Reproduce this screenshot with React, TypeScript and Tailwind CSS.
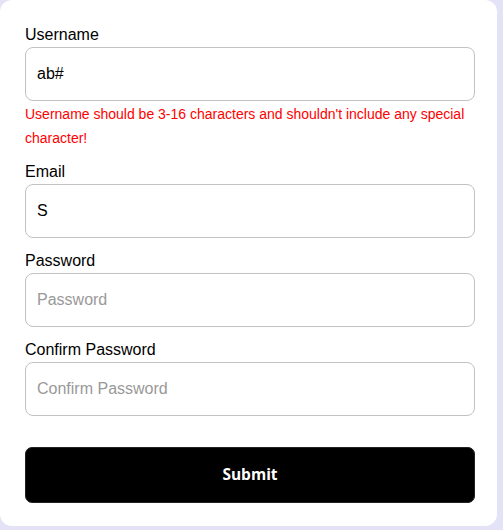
import { useState } from "react";

type Field = {
  name: string;
  label: string;
  type: string;
  placeholder: string;
  error?: string;
};

const fields: Field[] = [
  {
    name: "username",
    label: "Username",
    type: "text",
    placeholder: "Username",
    error: "Username should be 3-16 characters and shouldn't include any special character!",
  },
  { name: "email", label: "Email", type: "email", placeholder: "Email" },
  { name: "password", label: "Password", type: "password", placeholder: "Password" },
  { name: "confirmPassword", label: "Confirm Password", type: "password", placeholder: "Confirm Password" },
];

export default function App() {
  const [values, setValues] = useState<Record<string, string>>({
    username: "ab#",
    email: "S",
    password: "",
    confirmPassword: "",
  });

  return (
    <div className="min-h-screen bg-[#e4e2f6] font-['Liberation_Sans',Arial,sans-serif]">
      <form
        className="w-[497px] rounded-[12px] bg-white pl-[25px] pr-[22px] pt-[25px] pb-[23px]"
        onSubmit={(e) => e.preventDefault()}
      >
        {fields.map((field) => (
          <FormInput
            key={field.name}
            field={field}
            value={values[field.name]}
            onChange={(v) => setValues({ ...values, [field.name]: v })}
          />
        ))}
        <button
          type="submit"
          className="mt-[18px] h-[56px] w-[450px] rounded-[7px] border border-[#222] bg-black font-['Open_Sans',sans-serif] text-[15.5px] font-bold text-white"
        >
          Submit
        </button>
      </form>
    </div>
  );
}

function FormInput({ field, value, onChange }: { field: Field; value: string; onChange: (v: string) => void }) {
  return (
    <div className="mb-[13px]">
      <label className="mb-[2px] block text-[16px] leading-[20px] text-black">{field.label}</label>
      <input
        type={field.type === "email" ? "text" : field.type}
        placeholder={field.placeholder}
        value={value}
        onChange={(e) => onChange(e.target.value)}
        className="block h-[54px] w-[450px] rounded-[8px] border border-[#c2c2c2] px-[11px] text-[16px] text-black outline-none placeholder:text-[#999]"
      />
      {field.error ? <p className="-mb-px pt-px text-[14px] leading-[24px] text-[#ff0000]">{field.error}</p> : null}
    </div>
  );
}
